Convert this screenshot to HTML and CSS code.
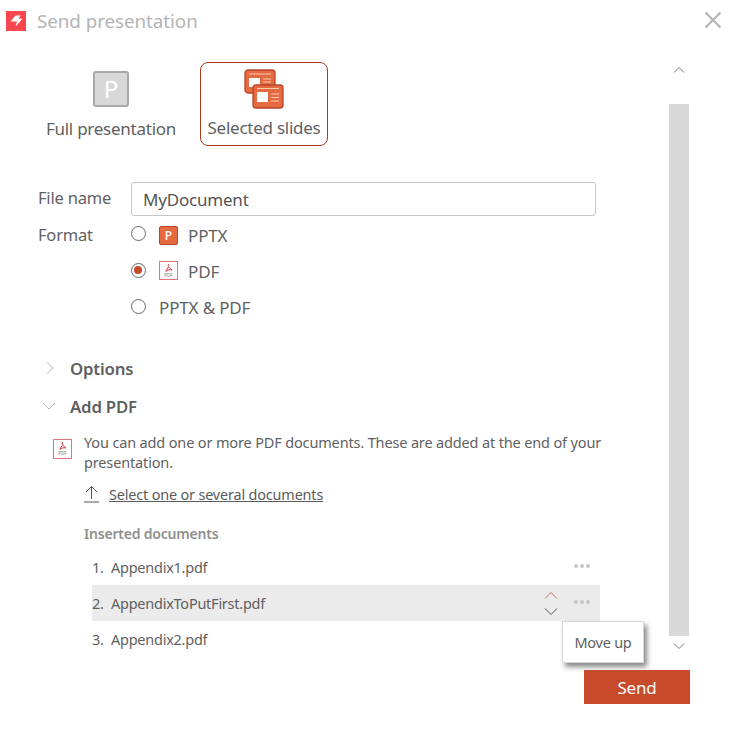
FILE: index.html
```html
<!DOCTYPE html>
<html lang="en">
<head>
<meta charset="utf-8">
<title>Send presentation</title>
<link rel="stylesheet" href="styles.css">
</head>
<body>
<div class="window">
  <header class="titlebar">
    <svg class="logo" width="20" height="20" viewBox="0 0 20 20"><rect width="20" height="20" fill="#f9474f"/><path d="M9.500 4.500h5l-1.800 3.300H16.500l-7 7.700 1.500-5H4.500z" fill="#fff"/></svg>
    <h1 class="title">Send presentation</h1>
    <svg class="close" width="18" height="18" viewBox="0 0 18 18"><path d="M1.500 1.500l15 15M16.500 1.500l-15 15" stroke="#b4b4b4" stroke-width="2.200" fill="none"/></svg>
  </header>
  <div class="main">
    <div class="content">
      <div class="modes">
        <div class="mode mode-full">
          <span class="p-tile">P</span>
          <span class="mode-label">Full presentation</span>
        </div>
        <div class="mode mode-selected">
          <svg width="40" height="40" viewBox="0 0 40 40">
            <rect x="1" y="1" width="30" height="23" rx="3" fill="#e56a40" stroke="#b7472a" stroke-width="1.300"/>
            <rect x="5" y="9" width="11" height="9" fill="#fff"/>
            <path d="M5 5h22M19 10h8M19 13h8" stroke="#f8c9b5" stroke-width="1.200"/>
            <rect x="9" y="16" width="30" height="23" rx="3" fill="#e56a40" stroke="#b7472a" stroke-width="1.300"/>
            <rect x="13" y="23" width="11" height="10" fill="#fff"/>
            <path d="M13 19.500h22M27 25h8M27 28.500h8M27 32h8" stroke="#f8c9b5" stroke-width="1.200"/>
          </svg>
          <span class="mode-label">Selected slides</span>
        </div>
      </div>
      <div class="field-row">
        <label class="field-label" for="fname">File name</label>
        <input id="fname" class="text-input" type="text" value="MyDocument">
      </div>
      <div class="format">
        <div class="field-label format-label">Format</div>
        <div class="radios">
          <div class="radio-row">
            <span class="radio"></span>
            <span class="ppt-icon">P</span>
            <span>PPTX</span>
          </div>
          <div class="radio-row">
            <span class="radio checked"></span>
            <svg class="pdf-icon" width="19" height="19" viewBox="0 0 19 19"><rect x=".5" y=".5" width="18" height="18" fill="#fff" stroke="#e2747c"/><path d="M9.500 3c-.6 2 0 2.500 1 4l2.500 2c-2-.5-4-.3-6.500 1.500M9 6.500l-2 3.500" stroke="#d9323c" stroke-width="1" fill="none"/><text class="pdf-mini" x="9.500" y="16">PDF</text></svg>
            <span>PDF</span>
          </div>
          <div class="radio-row">
            <span class="radio"></span>
            <span>PPTX &amp; PDF</span>
          </div>
        </div>
      </div>
      <div class="section section-options">
        <svg class="chev" width="10" height="14" viewBox="0 0 10 14"><path d="M2 1.500l6 5.500-6 5.500" stroke="#b8b8b8" fill="none"/></svg>
        <span class="section-title">Options</span>
      </div>
      <div class="section section-add">
        <svg class="chev chev-open" width="14" height="10" viewBox="0 0 14 10"><path d="M1 2l6 6 6-6" stroke="#b8b8b8" fill="none"/></svg>
        <span class="section-title">Add PDF</span>
      </div>
      <div class="notice">
        <svg class="pdf-icon notice-icon" width="19" height="20" viewBox="0 0 19 20"><rect x=".5" y=".5" width="18" height="19" fill="#fff" stroke="#e2747c"/><path d="M9.500 3c-.6 2 0 2.500 1 4l2.500 2c-2-.5-4-.3-6.500 1.500M9 6.500l-2 3.500" stroke="#d9323c" stroke-width="1" fill="none"/><text class="pdf-mini" x="9.500" y="16">PDF</text></svg>
        <p class="notice-text">You can add one or more PDF documents. These are added at the end of your presentation.</p>
      </div>
      <div class="upload">
        <svg width="15" height="18" viewBox="0 0 15 18"><path d="M7.500 14V1.500M2 7l5.500-5.500L13 7M0 17h15" stroke="#555" stroke-width="1" fill="none"/></svg>
        <a class="upload-link" href="#">Select one or several documents</a>
      </div>
      <div class="list-title">Inserted documents</div>
      <ol class="doc-list">
        <li class="doc">
          <span class="doc-num">1.</span><span class="doc-name">Appendix1.pdf</span>
          <span class="dots"><i></i><i></i><i></i></span>
        </li>
        <li class="doc doc-active">
          <span class="doc-num">2.</span><span class="doc-name">AppendixToPutFirst.pdf</span>
          <span class="movers">
            <svg width="14" height="9" viewBox="0 0 14 9"><path d="M1 7.500l6-6 6 6" stroke="#c0766a" fill="none"/></svg>
            <svg width="14" height="9" viewBox="0 0 14 9"><path d="M1 1.500l6 6 6-6" stroke="#555" fill="none"/></svg>
          </span>
          <span class="dots"><i></i><i></i><i></i></span>
          <div class="tooltip">Move up</div>
        </li>
        <li class="doc">
          <span class="doc-num">3.</span><span class="doc-name">Appendix2.pdf</span>
        </li>
      </ol>
    </div>
    <div class="scrollbar">
      <svg width="12" height="8" viewBox="0 0 12 8"><path d="M1 6.500l5-5 5 5" stroke="#777" fill="none"/></svg>
      <div class="thumb"></div>
      <svg width="12" height="8" viewBox="0 0 12 8"><path d="M1 1.500l5 5 5-5" stroke="#777" fill="none"/></svg>
    </div>
  </div>
  <footer class="footer">
    <button class="send" type="button">Send</button>
  </footer>
</div>
</body>
</html>
```
FILE: styles.css
```css
* { box-sizing: border-box; }
html, body { margin: 0; padding: 0; background: #fff; }
body { font-family: "Noto Sans", "Open Sans", "Liberation Sans", sans-serif; color: #5f5f5f; }
.window { width: 730px; height: 729px; display: flex; flex-direction: column; overflow: hidden; }

.titlebar { height: 42px; display: flex; align-items: center; padding: 0 8px 0 6px; flex: none; }
.logo { flex: none; }
.title { margin: 0 0 0 11px; font-size: 18.800px; font-weight: 400; color: #b4b4b4; letter-spacing: -.05px; line-height: 42px; flex: 1; }
.close { flex: none; margin-top: -2px; }

.main { display: flex; height: 628px; flex: none; }
.content { width: 663px; flex: none; }

.modes { display: flex; padding: 20px 0 0 38px; height: 140px; }
.mode { display: flex; flex-direction: column; align-items: center; }
.mode-label { font-size: 17px; letter-spacing: -.25px; white-space: nowrap; line-height: 22px; }
.mode-full { width: 146px; padding-top: 9px; margin-right: 16px; }
.p-tile { width: 36px; height: 36px; border: 2px solid #a9a9a9; border-radius: 3px; background: #d8d8d8; color: #fff; font-size: 24px; line-height: 32px; text-align: center; margin-bottom: 11px; }
.mode-selected { width: 128px; height: 84px; border: 1px solid #a83a25; border-radius: 8px; padding-top: 6px; }
.mode-selected .mode-label { margin-top: 8px; }

.field-row { display: flex; align-items: center; padding-left: 38px; }
.field-label { width: 93px; font-size: 16.500px; letter-spacing: -.2px; line-height: 22px; flex: none; }
.field-row .field-label { margin-bottom: 2px; }
.text-input { width: 465px; height: 34px; border: 1px solid #c8c8c8; border-radius: 3px; padding: 1px 11px 0; font: inherit; font-size: 17px; color: #555; letter-spacing: -.2px; outline: none; }

.format { display: flex; padding: 0 0 0 38px; height: 133px; }
.format-label { margin-top: 8px; }
.radios { display: flex; flex-direction: column; padding-top: 1px; font-size: 17px; letter-spacing: -.15px; }
.radio-row { display: flex; align-items: center; height: 36.400px; }
.radio { width: 15px; height: 15px; border: 1.800px solid #666; border-radius: 50%; margin-right: 13px; margin-top: -3px; position: relative; flex: none; }
.radio.checked::after { content: ""; position: absolute; left: 2px; top: 2px; width: 8px; height: 8px; border-radius: 50%; background: #c74b2b; }
.ppt-icon { width: 19px; height: 19px; border-radius: 2px; background: #e56a40; border: 1px solid #b7472a; color: #fff; font-size: 12px; font-weight: 500; line-height: 17px; text-align: center; margin-right: 10px; flex: none; letter-spacing: 0; }
.pdf-icon { flex: none; margin-right: 10px; margin-top: -2px; }
.pdf-mini { font-size: 4.500px; fill: #777; text-anchor: middle; letter-spacing: 0; }

.section { display: flex; align-items: center; height: 38px; padding-left: 45px; }
.section-title { font-size: 16.800px; font-weight: 600; letter-spacing: -.2px; margin-left: 15px; }
.section-add { padding-left: 42px; }
.chev-open + .section-title { margin-left: 14px; }

.notice { display: flex; padding: 7px 0 0 53px; }
.notice-icon { margin: 7px 12px 0 0; }
.notice-text { margin: 0; width: 530px; font-size: 14.500px; line-height: 20px; letter-spacing: -.15px; }

.upload { display: flex; align-items: center; height: 24px; margin: 10px 0 0 84px; }
.upload-link { margin-left: 10px; font-size: 14.400px; letter-spacing: -.15px; color: #5a5a5a; text-decoration: underline; }

.list-title { margin: 18px 0 0 84px; font-size: 14px; font-weight: 600; letter-spacing: -.2px; color: #8f8f8f; line-height: 20px; }

.doc-list { list-style: none; margin: 5px 0 0 92px; padding: 0; width: 508px; }
.doc { display: flex; align-items: center; height: 36px; font-size: 14.500px; letter-spacing: -.25px; position: relative; padding-right: 6px; }
.doc-active { background: #ebebeb; }
.doc-num { width: 19px; flex: none; text-align: left; }
.doc-name { flex: 1; }
.movers { display: flex; flex-direction: column; gap: 7px; margin-right: 16px; }
.dots { display: flex; gap: 2px; width: 20px; flex: none; margin-top: -2px; }
.dots i { width: 4px; height: 4px; border-radius: 50%; background: #c6c6c6; }
.tooltip { position: absolute; left: 470px; top: 36px; width: 82px; height: 42px; background: #fff; border: 1px solid #d8d8d8; box-shadow: 3px 4px 5px #8a8a8a; font-size: 14.500px; line-height: 40px; text-align: center; z-index: 2; }

.scrollbar { width: 20px; margin-left: 6px; display: flex; flex-direction: column; align-items: center; padding-top: 24px; }
.thumb { width: 20px; height: 532px; background: #d8d8d8; margin: 30px 0 6px; flex: none; }

.footer { display: flex; justify-content: flex-end; padding-right: 40px; }
.send { width: 106px; height: 34px; background: #c74b2b; border: 0; color: #fff; font: inherit; font-size: 17px; letter-spacing: -.2px; padding: 0; }
```
